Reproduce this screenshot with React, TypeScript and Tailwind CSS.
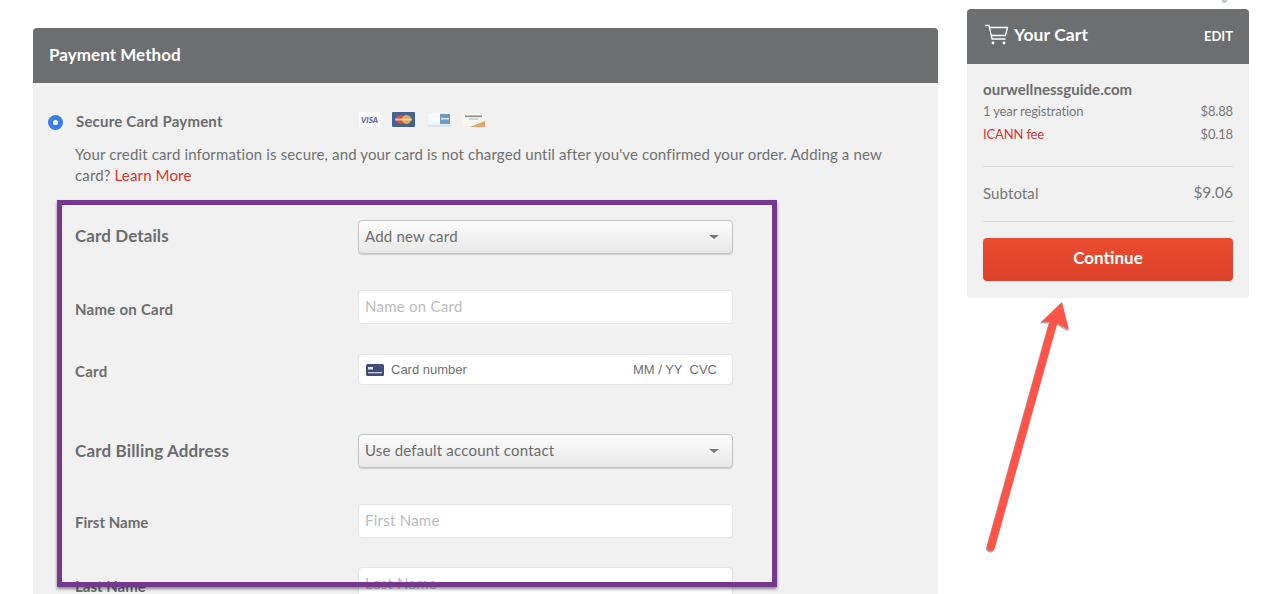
const font = "font-['Lato','Liberation_Sans',sans-serif]"

function CaretSelect({ value }: { value: string }) {
  return (
    <div className="flex h-[34px] w-[375px] items-center justify-between rounded-[4px] border border-[#c4c4c4] bg-gradient-to-b from-[#fcfcfc] to-[#e8e8e8] pb-[2px] pl-[6px] pr-[13px] text-[15px] tracking-[0.2px] text-[#6b6c6e] shadow-[0_1px_1px_rgba(0,0,0,0.15)]">
      <span>{value}</span>
      <span className="mt-[2px] h-0 w-0 border-x-[5px] border-t-[4px] border-x-transparent border-t-[#77787a]" />
    </div>
  )
}

function TextField({ placeholder }: { placeholder: string }) {
  return (
    <div className="flex h-[34px] w-[375px] items-center rounded-[4px] border border-[#e6e6e6] bg-white pb-[2px] pl-[6px] text-[15px] tracking-[0.25px] text-[#bcbcbc]">
      {placeholder}
    </div>
  )
}

function CardLogos() {
  return (
    <div className="mb-[6px] flex items-center">
      <svg width="21" height="15" viewBox="0 0 21 15" className="mr-[12px]">
        <rect width="21" height="15" rx="1" fill="#fbfbfd" />
        <text x="10.5" y="10.5" textAnchor="middle" fontSize="8" fontWeight="900" fontStyle="italic" fill="#5b6aa8" fontFamily="Lato">VISA</text>
      </svg>
      <svg width="23" height="15" viewBox="0 0 23 15" className="mr-[13px]">
        <rect width="23" height="15" rx="1" fill="#48628f" />
        <circle cx="8.5" cy="7.5" r="4.5" fill="#d2504a" />
        <circle cx="14.5" cy="7.5" r="4.5" fill="#e3a94f" />
        <rect x="3" y="6.5" width="17" height="2" fill="#f0dcc0" opacity="0.75" />
      </svg>
      <svg width="23" height="15" viewBox="0 0 23 15" className="mr-[11px]">
        <rect width="23" height="15" rx="1" fill="#f6fafc" stroke="#dfe7ec" strokeWidth="0.5" />
        <path d="M0 12.5H23V15H0Z" fill="#d5e6f2" />
        <rect x="12" y="2" width="10" height="10" fill="#6d9cc5" />
        <rect x="13" y="6" width="8" height="1.5" fill="#dcebf4" />
      </svg>
      <svg width="23" height="15" viewBox="0 0 23 15">
        <rect width="23" height="15" rx="1" fill="#f8f6f2" stroke="#e2e0dc" strokeWidth="0.5" />
        <rect x="3" y="3.5" width="17" height="1.6" fill="#8a8d92" />
        <rect x="7" y="6.5" width="9" height="1" fill="#b5b6b8" />
        <path d="M8 15L23 9V15Z" fill="#e5a566" />
      </svg>
    </div>
  )
}

function CartIcon() {
  return (
    <svg width="25" height="22" viewBox="0 0 25 22" fill="none" stroke="white" strokeWidth="1.3" className="mr-[5px]">
      <path d="M1 1.5H5L8 15H21.5" />
      <path d="M5.5 3.5H23.5L21.5 11.5H7.2" />
      <circle cx="9" cy="19" r="1.4" fill="white" stroke="none" />
      <circle cx="20" cy="19" r="1.4" fill="white" stroke="none" />
    </svg>
  )
}

export default function App() {
  return (
    <div className={`${font} relative h-[594px] w-[1280px] overflow-hidden bg-white`}>
      <div className="flex items-start pl-[33px]">
        <div className="mt-[28px] h-[566px] w-[905px] overflow-hidden rounded-t-[4px] bg-[#f1f1f1]">
          <div className="flex h-[55px] items-center bg-[#6d6e70] pb-[2px] pl-[16px] text-[17px] font-bold tracking-[0.05px] text-white">
            Payment Method
          </div>

          <div className="mt-[27px] flex h-[24px] items-center pl-[15px]">
            <span className="flex h-[15px] w-[15px] items-center justify-center rounded-full bg-[#3b7ee6]">
              <span className="h-[5px] w-[5px] rounded-full bg-white" />
            </span>
            <span className="mb-[2px] ml-[13px] w-[283px] text-[15px] font-bold tracking-[0.2px] text-[#6b6c6e]">Secure Card Payment</span>
            <CardLogos />
          </div>

          <p className="mt-[10px] ml-[42px] w-[830px] text-[15px] leading-[21px] tracking-[0.14px] text-[#6f7072]">
            Your credit card information is secure, and your card is not charged until after you've confirmed your order. Adding a new card? <span className="text-[#d9362b]">Learn More</span>
          </p>

          <div className="mt-[34px] ml-[42px] flex flex-col text-[#6b6c6e]">
            <div className="flex items-center">
              <span className="mb-[2px] w-[283px] text-[17px] font-bold tracking-[0.1px]">Card Details</span>
              <CaretSelect value="Add new card" />
            </div>
            <div className="mt-[36px] flex items-center">
              <span className="mt-[4px] w-[283px] text-[15px] font-bold tracking-[0.25px]">Name on Card</span>
              <TextField placeholder="Name on Card" />
            </div>
            <div className="mt-[30px] flex items-center">
              <span className="mt-[4px] w-[283px] text-[15px] font-bold tracking-[0.25px]">Card</span>
              <div className="flex h-[31px] w-[375px] items-center rounded-[4px] border border-[#e6e6e6] bg-white pl-[7px] pr-[15px] font-['Liberation_Sans',sans-serif] text-[13px] text-[#6f7072]">
                <svg width="18" height="12" viewBox="0 0 18 12" className="mr-[7px]">
                  <rect width="18" height="12" rx="1.5" fill="#3f4d78" />
                  <rect x="2" y="3" width="5" height="2.5" fill="#e8eaf0" />
                  <rect x="2" y="8" width="14" height="1.3" fill="#c9cede" />
                </svg>
                <span>Card number</span>
                <span className="ml-auto">MM / YY</span>
                <span className="ml-[7px]">CVC</span>
              </div>
            </div>
            <div className="mt-[49px] flex items-center">
              <span className="w-[283px] text-[17px] font-bold tracking-[0.15px]">Card Billing Address</span>
              <CaretSelect value="Use default account contact" />
            </div>
            <div className="mt-[36px] flex items-center">
              <span className="mt-[2px] w-[283px] text-[15px] font-bold">First Name</span>
              <TextField placeholder="First Name" />
            </div>
            <div className="mt-[29px] flex items-center">
              <span className="mt-[4px] w-[283px] text-[15px] font-bold">Last Name</span>
              <TextField placeholder="Last Name" />
            </div>
          </div>
        </div>

        <div className="mt-[9px] ml-[29px] w-[282px] rounded-[4px] bg-[#f1f1f1] pb-[17px]">
          <div className="flex h-[55px] items-center justify-between rounded-t-[4px] bg-[#6d6e70] pl-[17px] pr-[16px] text-white">
            <div className="mb-[3px] flex items-center">
              <CartIcon />
              <span className="text-[17.5px] font-bold tracking-[0.1px]">Your Cart</span>
            </div>
            <span className="text-[13px] font-bold">EDIT</span>
          </div>
          <div className="px-[16px]">
            <div className="mt-[15px] text-[15px] font-bold leading-[20px] tracking-[0.05px] text-[#6b6c6e]">ourwellnessguide.com</div>
            <div className="mt-[2px] flex justify-between text-[13px] leading-[20px] tracking-[-0.15px] text-[#77787a]">
              <span>1 year registration</span>
              <span>$8.88</span>
            </div>
            <div className="mt-[3px] flex justify-between text-[13px] leading-[20px] tracking-[-0.15px] text-[#77787a]">
              <span className="text-[#d9362b]">ICANN fee</span>
              <span>$0.18</span>
            </div>
            <div className="mt-[22px] flex h-[56px] items-center justify-between border-y border-[#dcdcdc] pb-[2px] text-[#77787a]">
              <span className="text-[15px] tracking-[0.1px]">Subtotal</span>
              <span className="text-[15.5px]">$9.06</span>
            </div>
            <div className="mt-[16px] flex h-[43px] items-center justify-center rounded-[4px] bg-gradient-to-b from-[#ea4c31] to-[#dc4129] pb-[3px] text-[17px] font-bold text-white">
              Continue
            </div>
          </div>
        </div>
      </div>

      {/* annotation layer */}
      <div className="absolute left-[57px] top-[200px] h-[387px] w-[720px] border-[5px] border-[#74388f] shadow-[0_2px_3px_rgba(0,0,0,0.45)]" />
      <svg className="absolute left-[980px] top-[298px]" width="100" height="260" viewBox="0 0 100 260">
        <g transform="translate(-1 1.5)" opacity="0.55">
          <path d="M11 249L73 26" stroke="#666" strokeWidth="8" strokeLinecap="round" />
          <path d="M82 4L89 32L75 24L61 24Z" fill="#666" />
        </g>
        <path d="M11 249L73 26" stroke="#ff5447" strokeWidth="8" strokeLinecap="round" />
        <path d="M82 4L89 32L75 24L61 24Z" fill="#ff5447" />
      </svg>
      <div className="absolute left-[1222px] top-0 h-[3px] w-[5px] rounded-b-full bg-[#c4c8c8]" />
    </div>
  )
}
